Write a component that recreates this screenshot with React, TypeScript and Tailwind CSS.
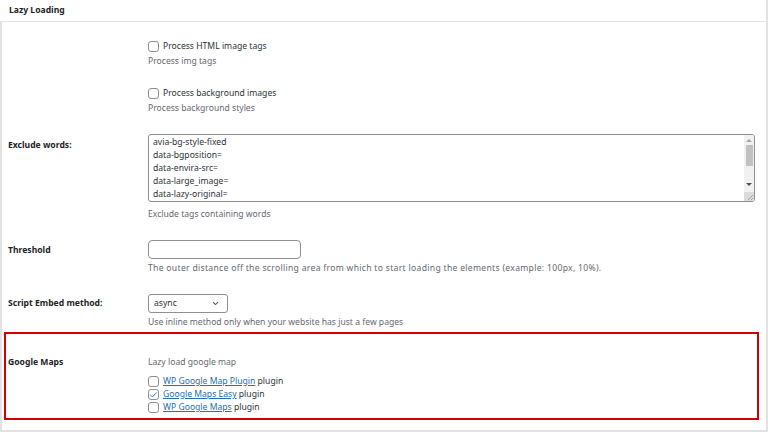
import { Check } from "lucide-react";

const words = [
  "avia-bg-style-fixed",
  "data-bgposition=",
  "data-envira-src=",
  "data-large_image=",
  "data-lazy-original=",
];

function Box({ checked = false }: { checked?: boolean }) {
  return (
    <span className="w-[11px] h-[11px] rounded-[3px] border border-[#8c8f94] bg-white flex items-center justify-center shrink-0">
      {checked && <Check size={10} strokeWidth={2.5} className="text-[#2271b1]" />}
    </span>
  );
}

function Desc({ children, className = "" }: { children: React.ReactNode; className?: string }) {
  return <p className={`text-[8.6px] leading-[14px] text-[#646970] ${className}`}>{children}</p>;
}

function Row({
  label,
  labelPad = "",
  className = "",
  children,
}: {
  label?: string;
  labelPad?: string;
  className?: string;
  children: React.ReactNode;
}) {
  return (
    <div className={`flex ${className}`}>
      <div className={`w-[146px] pl-[6px] shrink-0 text-[8.6px] leading-[14px] font-bold text-[#1d2327] ${labelPad}`}>
        {label}
      </div>
      <div className="flex-1 min-w-0">{children}</div>
    </div>
  );
}

function PluginOption({ name, checked }: { name: string; checked?: boolean }) {
  return (
    <label className="flex items-center gap-[4px] h-[13px] text-[8.6px] text-[#2c3338]">
      <Box checked={checked} />
      <span>
        <a className="text-[#2271b1] underline">{name}</a> plugin
      </span>
    </label>
  );
}

export default function App() {
  return (
    <div
      className="w-[768px] h-[432px] bg-[#e2e2e2] flex flex-col overflow-hidden"
      style={{ fontFamily: "'Noto Sans', 'Open Sans', sans-serif" }}
    >
      <div className="mr-[2px] mb-[2px] flex-1 bg-white flex flex-col">
        <div className="h-[22px] border-b border-[#e2e2e2] pl-[9px] pb-[1px] flex items-center text-[8.6px] font-bold text-[#1d2327]">
          Lazy Loading
        </div>
        <div className="flex-1 border-l-2 border-[#e2e2e2] flex flex-col">
          <Row className="pt-[18px]">
            <label className="flex items-center gap-[4px] h-[12px] text-[8.6px] text-[#2c3338]">
              <Box /> Process HTML image tags
            </label>
            <Desc className="mt-[2px]">Process img tags</Desc>
            <label className="mt-[19px] flex items-center gap-[4px] h-[12px] text-[8.6px] text-[#2c3338]">
              <Box /> Process background images
            </label>
            <Desc className="mt-[2px]">Process background styles</Desc>
          </Row>

          <Row label="Exclude words:" labelPad="pt-[4px]" className="pt-[19px]">
            <div className="w-[607px] h-[68px] border border-[#8c8f94] rounded-[3px] flex overflow-hidden">
              <div className="flex-1 pl-[4px] pt-[1px] text-[8.6px] leading-[13px] text-[#2c3338]">
                {words.map((w) => (
                  <div key={w}>{w}</div>
                ))}
              </div>
              <div className="w-[10px] bg-[#f1f1f1] flex flex-col items-center">
                <span className="mt-[4px] w-0 h-0 border-x-[3px] border-x-transparent border-b-[3px] border-b-[#a3a3a3]" />
                <span className="mt-[3px] w-[7px] h-[21px] bg-[#c1c1c1]" />
                <span className="mt-[17px] w-0 h-0 border-x-[3px] border-x-transparent border-t-[3px] border-t-[#505050]" />
                <span className="mt-auto w-[10px] h-[9px] bg-[#dcdcdc] flex items-end justify-end">
                  <svg width="7" height="7" viewBox="0 0 7 7">
                    <path d="M1 6 L6 1 M4 6 L6 4" stroke="#9a9a9a" strokeWidth="0.8" />
                  </svg>
                </span>
              </div>
            </div>
            <Desc className="mt-[5px]">Exclude tags containing words</Desc>
          </Row>

          <Row label="Threshold" labelPad="pt-[3px]" className="pt-[19px]">
            <div className="w-[153px] h-[19px] border border-[#8c8f94] rounded-[4px] bg-white" />
            <Desc className="mt-[2px] tracking-[0.3px]">
              The outer distance off the scrolling area from which to start loading the elements (example: 100px, 10%).
            </Desc>
          </Row>

          <Row label="Script Embed method:" labelPad="pt-[2px]" className="pt-[19px]">
            <div className="w-[80px] h-[19px] border border-[#8c8f94] rounded-[3px] bg-white flex items-center pl-[5px] pr-[8px] text-[8.6px] text-[#2c3338]">
              <span className="flex-1">async</span>
              <svg width="7" height="5" viewBox="0 0 7 5" fill="none">
                <path d="M1 1.2 L3.5 3.6 L6 1.2" stroke="#50575e" strokeWidth="1.1" />
              </svg>
            </div>
            <Desc className="mt-[2px]">Use inline method only when your website has just a few pages</Desc>
          </Row>

          <div className="mt-[3px] ml-[2px] w-[755px] h-[88px] border-2 border-[#d40000] flex pt-[21px]">
            <div className="w-[142px] pl-[2px] text-[8.6px] font-bold text-[#1d2327] leading-[14px]">
              Google Maps
            </div>
            <div className="flex flex-col">
              <Desc>Lazy load google map</Desc>
              <div className="mt-[6px] flex flex-col">
                <PluginOption name="WP Google Map Plugin" />
                <PluginOption name="Google Maps Easy" checked />
                <PluginOption name="WP Google Maps" />
              </div>
            </div>
          </div>
        </div>
      </div>
    </div>
  );
}
